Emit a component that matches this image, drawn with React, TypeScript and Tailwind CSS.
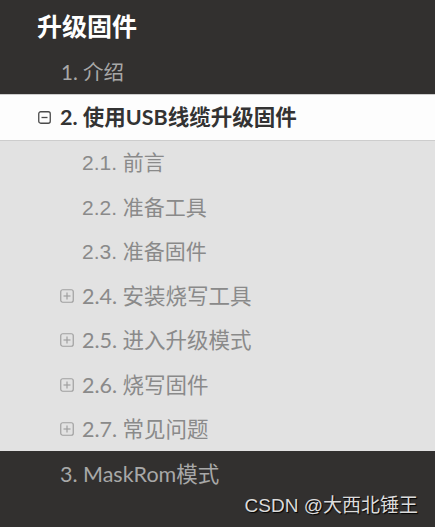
import React from 'react';

const sans = "font-['Lato','Noto_Sans_CJK_SC',sans-serif]";

const MinusBox: React.FC = () => (
  <svg width="13" height="13" viewBox="0 0 13 13" className="shrink-0">
    <rect x="0.75" y="0.75" width="11.5" height="11.5" rx="2" fill="none" stroke="#4a4a4a" strokeWidth="1.3" />
    <line x1="3.5" y1="6.5" x2="9.5" y2="6.5" stroke="#4a4a4a" strokeWidth="1.3" />
  </svg>
);

const PlusBox: React.FC = () => (
  <svg width="14" height="14" viewBox="0 0 14 14" className="shrink-0">
    <rect x="0.75" y="0.75" width="12.5" height="12.5" rx="2" fill="none" stroke="#a0a0a0" strokeWidth="1.2" />
    <line x1="3.5" y1="7" x2="10.5" y2="7" stroke="#a0a0a0" strokeWidth="1.2" />
    <line x1="7" y1="3.5" x2="7" y2="10.5" stroke="#a0a0a0" strokeWidth="1.2" />
  </svg>
);

const subItems = [
  { label: '2.1. 前言', expandable: false },
  { label: '2.2. 准备工具', expandable: false },
  { label: '2.3. 准备固件', expandable: false },
  { label: '2.4. 安装烧写工具', expandable: true },
  { label: '2.5. 进入升级模式', expandable: true },
  { label: '2.6. 烧写固件', expandable: true },
  { label: '2.7. 常见问题', expandable: true },
];

const App: React.FC = () => {
  return (
    <div className={`relative w-[435px] h-[527px] overflow-hidden bg-[#32302f] ${sans}`}>
      <div className="h-[50px] flex items-center pl-[37px] pt-[4px] text-[25px] font-bold text-white">
        升级固件
      </div>
      <div className="h-[44px] flex items-center pl-[61px] text-[20.5px] text-[#a8a8a8]">
        1. 介绍
      </div>

      <div className="h-[47px] flex items-center gap-[9px] pl-[38px] bg-[#fdfdfd] border-y border-[#cdcdcd] text-[21.5px] font-bold text-[#333333]">
        <MinusBox />
        <span>2. 使用USB线缆升级固件</span>
      </div>

      <div className="bg-[#e2e2e2]">
        {subItems.map(item => (
          <div
            key={item.label}
            className={`h-[44.3px] flex items-center text-[#8a8a8a] ${
              item.expandable
                ? 'pl-[60px] gap-[8px] text-[21.5px]'
                : "pl-[82px] text-[21px] font-['Liberation_Sans','Noto_Sans_CJK_SC',sans-serif]"
            }`}
          >
            {item.expandable && <PlusBox />}
            <span>{item.label}</span>
          </div>
        ))}
      </div>

      <div className="h-[46px] flex items-center pl-[60px] text-[21.5px] text-[#a8a8a8]">
        3. MaskRom模式
      </div>

      <div className="absolute right-[17px] bottom-[7px] text-[19px] text-[#dcdcdc] font-['Liberation_Sans','Noto_Sans_CJK_SC',sans-serif] [text-shadow:1px_1px_1px_#000]">
        CSDN @大西北锤王
      </div>
    </div>
  );
};

export default App;
